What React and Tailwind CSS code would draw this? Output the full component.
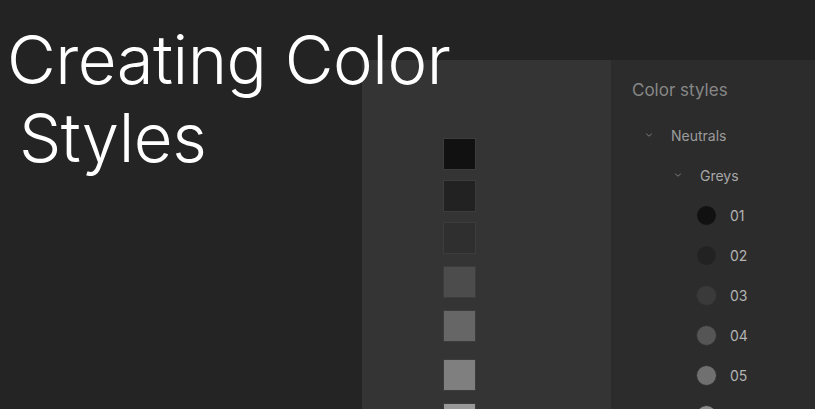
import React from "react";

const swatches = [
  { c: "#111111", mt: "mt-[78px]" },
  { c: "#222222", mt: "mt-[10px]" },
  { c: "#2f2f2f", mt: "mt-[10px]" },
  { c: "#4c4c4c", mt: "mt-[12px]" },
  { c: "#666666", mt: "mt-[12px]" },
  { c: "#7f7f7f", mt: "mt-[17px]" },
  { c: "#999999", mt: "mt-[12px]" },
];

const greys = [
  { id: "01", c: "#111111" },
  { id: "02", c: "#222222" },
  { id: "03", c: "#3a3a3a" },
  { id: "04", c: "#555555" },
  { id: "05", c: "#707070" },
  { id: "06", c: "#8a8a8a" },
];

function Chevron() {
  return (
    <svg width="8" height="6" viewBox="0 0 8 6" fill="none" className="shrink-0">
      <path d="M1.5 2 L4 4.2 L6.5 2" stroke="#7a7a7a" strokeWidth="1" strokeLinecap="round" />
    </svg>
  );
}

export default function App() {
  return (
    <div
      className="relative w-[815px] h-[409px] overflow-hidden bg-[#232323]"
      style={{ fontFamily: "Inter, 'Noto Sans', sans-serif" }}
    >
      <div className="flex flex-col h-full">
        <div className="h-[60px] shrink-0" />
        <div className="flex flex-1 min-h-0">
          <div className="w-[362px] shrink-0 bg-[#242424]" />
          {/* canvas with the swatch frames */}
          <div className="w-[249px] shrink-0 bg-[#343434] pl-[81px] flex flex-col">
            {swatches.map((s, i) => (
              <div
                key={i}
                className={`${s.mt} w-[33px] h-[32px] shrink-0 border border-[#3c3c3c]`}
                style={{ backgroundColor: s.c }}
              />
            ))}
          </div>
          {/* styles sidebar */}
          <div className="flex-1 bg-[#2c2c2c] pl-[21px] pt-[19px]">
            <div className="text-[17px] leading-[22px] text-[#878787]">Color styles</div>
            <div className="mt-[22px] flex items-center h-[24px] pl-[13px] gap-[18px]">
              <Chevron />
              <span className="text-[14px] text-[#9c9c9c]">Neutrals</span>
            </div>
            <div className="mt-[16px] flex items-center h-[24px] pl-[42px] gap-[18px]">
              <Chevron />
              <span className="text-[14px] text-[#a8a8a8]">Greys</span>
            </div>
            <div className="flex flex-col mt-[8px]">
              {greys.map((g) => (
                <div key={g.id} className="flex items-center h-[40px] pl-[64px] gap-[13px]">
                  <div
                    className="w-[21px] h-[21px] rounded-full border border-[#2f2f2f]"
                    style={{ backgroundColor: g.c }}
                  />
                  <span className="text-[14px] text-[#b3b3b3]">{g.id}</span>
                </div>
              ))}
            </div>
          </div>
        </div>
      </div>
      {/* title overlay */}
      <div className="absolute left-[7px] top-[21px] text-white text-[67px] leading-[78px] font-light tracking-[-0.5px]">
        <div>Creating Color</div>
        <div className="pl-[12px]">Styles</div>
      </div>
    </div>
  );
}
